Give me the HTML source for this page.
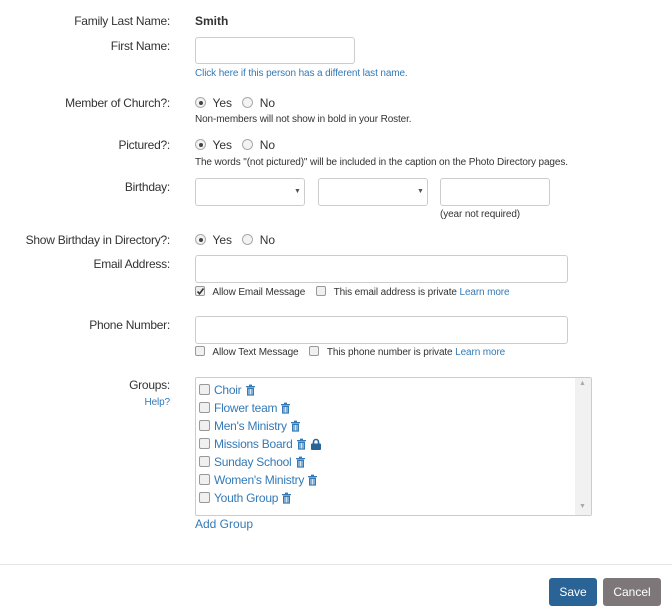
<!DOCTYPE html>
<html><head><meta charset="utf-8"><style>
*{box-sizing:border-box;margin:0;padding:0}
body{width:672px;height:616px;background:#fff;font-family:"Liberation Sans",Arial,sans-serif;color:#333;position:relative;overflow:hidden;font-size:12px}
.a{position:absolute;white-space:nowrap}
.lbl{position:absolute;right:502px;text-align:right;white-space:nowrap;font-size:12px;color:#333;letter-spacing:-0.25px}
.inp{position:absolute;border:1px solid #ccc;border-radius:3px;background:#fff}
.note{position:absolute;font-size:10px;white-space:nowrap;color:#333;letter-spacing:-0.12px}
.lnk{color:#337ab7}
.rad{display:inline-block;width:11px;height:11px;border:1px solid #aaa;border-radius:50%;background:#f3f3f3;vertical-align:-1px;position:relative}
.rad.on::after{content:"";position:absolute;left:2.5px;top:2.5px;width:4px;height:4px;border-radius:50%;background:#444}
.cb{display:inline-block;width:10px;height:10px;border:1px solid #999;border-radius:2px;background:#f0f0f0;vertical-align:-1px;position:relative}
.grp{position:absolute;left:199px;font-size:12px;color:#337ab7;white-space:nowrap;letter-spacing:-0.25px}
.grp .cb{margin-right:4px;width:11px;height:11px}
svg{vertical-align:-2px}
.arrow{position:absolute;font-size:7px;color:#555}
</style></head><body>
<div class="lbl" style="top:14px">Family Last Name:</div>
<div class="a" style="left:195px;top:14px;font-weight:bold">Smith</div>

<div class="lbl" style="top:39px">First Name:</div>
<div class="inp" style="left:195px;top:37px;width:160px;height:27px"></div>
<div class="note lnk" style="left:195px;top:68px">Click here if this person has a different last name.</div>

<div class="lbl" style="top:96px">Member of Church?:</div>
<div class="a" style="left:195px;top:96px"><span class="rad on"></span>&nbsp; Yes &nbsp; <span class="rad"></span>&nbsp; No</div>
<div class="note" style="left:195px;top:114px">Non-members will not show in bold in your Roster.</div>

<div class="lbl" style="top:138px">Pictured?:</div>
<div class="a" style="left:195px;top:138px"><span class="rad on"></span>&nbsp; Yes &nbsp; <span class="rad"></span>&nbsp; No</div>
<div class="note" style="left:195px;top:157px">The words "(not pictured)" will be included in the caption on the Photo Directory pages.</div>

<div class="lbl" style="top:180px">Birthday:</div>
<div class="inp" style="left:195px;top:178px;width:110px;height:28px"></div>
<div class="arrow" style="left:294px;top:188px">▼</div>
<div class="inp" style="left:318px;top:178px;width:110px;height:28px"></div>
<div class="arrow" style="left:417px;top:188px">▼</div>
<div class="inp" style="left:440px;top:178px;width:110px;height:28px"></div>
<div class="note" style="left:440px;top:209px">(year not required)</div>

<div class="lbl" style="top:233px">Show Birthday in Directory?:</div>
<div class="a" style="left:195px;top:233px"><span class="rad on"></span>&nbsp; Yes &nbsp; <span class="rad"></span>&nbsp; No</div>

<div class="lbl" style="top:257px">Email Address:</div>
<div class="inp" style="left:195px;top:255px;width:373px;height:28px"></div>
<div class="note" style="left:195px;top:286px"><span class="cb" style="background:#eee"><svg width="9" height="9" viewBox="0 0 9 9" style="position:absolute;left:0;top:0"><path d="M1.5 4.5l2 2.2L7.5 1.5" fill="none" stroke="#333" stroke-width="1.6"/></svg></span>&nbsp;&nbsp; Allow Email Message &nbsp;&nbsp; <span class="cb"></span>&nbsp;&nbsp; This email address is private <span class="lnk">Learn more</span></div>

<div class="lbl" style="top:318px">Phone Number:</div>
<div class="inp" style="left:195px;top:316px;width:373px;height:28px"></div>
<div class="note" style="left:195px;top:346px"><span class="cb"></span>&nbsp;&nbsp; Allow Text Message &nbsp;&nbsp; <span class="cb"></span>&nbsp;&nbsp; This phone number is private <span class="lnk">Learn more</span></div>

<div class="lbl" style="top:378px">Groups:</div>
<div class="note lnk" style="right:502px;top:397px;text-align:right">Help?</div>
<div class="inp" style="left:195px;top:377px;width:397px;height:139px;border-radius:2px"></div>
<div class="a" style="left:575px;top:378px;width:16px;height:137px;background:#f1f1f1"></div>
<div class="arrow" style="left:579px;top:380px;color:#aaa">▲</div>
<div class="arrow" style="left:579px;top:503px;color:#aaa">▼</div>

<div class="grp" style="top:383px"><span class="cb"></span>Choir <svg width="11" height="12" viewBox="0 0 11 12"><path fill="#337ab7" d="M1 2h9v1.3H1zM4 0.6h3v1.4H4zM2 3.6h7v8H2z"/><path stroke="#fff" stroke-width=".8" d="M4 5v5.5M5.5 5v5.5M7 5v5.5"/></svg></div>
<div class="grp" style="top:401px"><span class="cb"></span>Flower team <svg width="11" height="12" viewBox="0 0 11 12"><path fill="#337ab7" d="M1 2h9v1.3H1zM4 0.6h3v1.4H4zM2 3.6h7v8H2z"/><path stroke="#fff" stroke-width=".8" d="M4 5v5.5M5.5 5v5.5M7 5v5.5"/></svg></div>
<div class="grp" style="top:419px"><span class="cb"></span>Men's Ministry <svg width="11" height="12" viewBox="0 0 11 12"><path fill="#337ab7" d="M1 2h9v1.3H1zM4 0.6h3v1.4H4zM2 3.6h7v8H2z"/><path stroke="#fff" stroke-width=".8" d="M4 5v5.5M5.5 5v5.5M7 5v5.5"/></svg></div>
<div class="grp" style="top:437px"><span class="cb"></span>Missions Board <svg width="11" height="12" viewBox="0 0 11 12"><path fill="#337ab7" d="M1 2h9v1.3H1zM4 0.6h3v1.4H4zM2 3.6h7v8H2z"/><path stroke="#fff" stroke-width=".8" d="M4 5v5.5M5.5 5v5.5M7 5v5.5"/></svg> <svg width="12" height="12" viewBox="0 0 12 12"><path d="M3.5 6V4a2.5 2.5 0 015 0v2" fill="none" stroke="#2a6496" stroke-width="1.6"/><rect x="1" y="5.5" width="10" height="6.5" rx="1" fill="#2a6496"/></svg></div>
<div class="grp" style="top:455px"><span class="cb"></span>Sunday School <svg width="11" height="12" viewBox="0 0 11 12"><path fill="#337ab7" d="M1 2h9v1.3H1zM4 0.6h3v1.4H4zM2 3.6h7v8H2z"/><path stroke="#fff" stroke-width=".8" d="M4 5v5.5M5.5 5v5.5M7 5v5.5"/></svg></div>
<div class="grp" style="top:473px"><span class="cb"></span>Women's Ministry <svg width="11" height="12" viewBox="0 0 11 12"><path fill="#337ab7" d="M1 2h9v1.3H1zM4 0.6h3v1.4H4zM2 3.6h7v8H2z"/><path stroke="#fff" stroke-width=".8" d="M4 5v5.5M5.5 5v5.5M7 5v5.5"/></svg></div>
<div class="grp" style="top:491px"><span class="cb"></span>Youth Group <svg width="11" height="12" viewBox="0 0 11 12"><path fill="#337ab7" d="M1 2h9v1.3H1zM4 0.6h3v1.4H4zM2 3.6h7v8H2z"/><path stroke="#fff" stroke-width=".8" d="M4 5v5.5M5.5 5v5.5M7 5v5.5"/></svg></div>

<div class="a lnk" style="left:195px;top:517px">Add Group</div>

<div class="a" style="left:0;top:564px;width:672px;height:1px;background:#e5e5e5"></div>
<div class="a" style="left:549px;top:578px;width:48px;height:28px;background:#2a6496;border-radius:3px;color:#fff;text-align:center;line-height:28px">Save</div>
<div class="a" style="left:603px;top:578px;width:58px;height:28px;background:#7d777a;border-radius:3px;color:#fff;text-align:center;line-height:28px">Cancel</div>
</body></html>
